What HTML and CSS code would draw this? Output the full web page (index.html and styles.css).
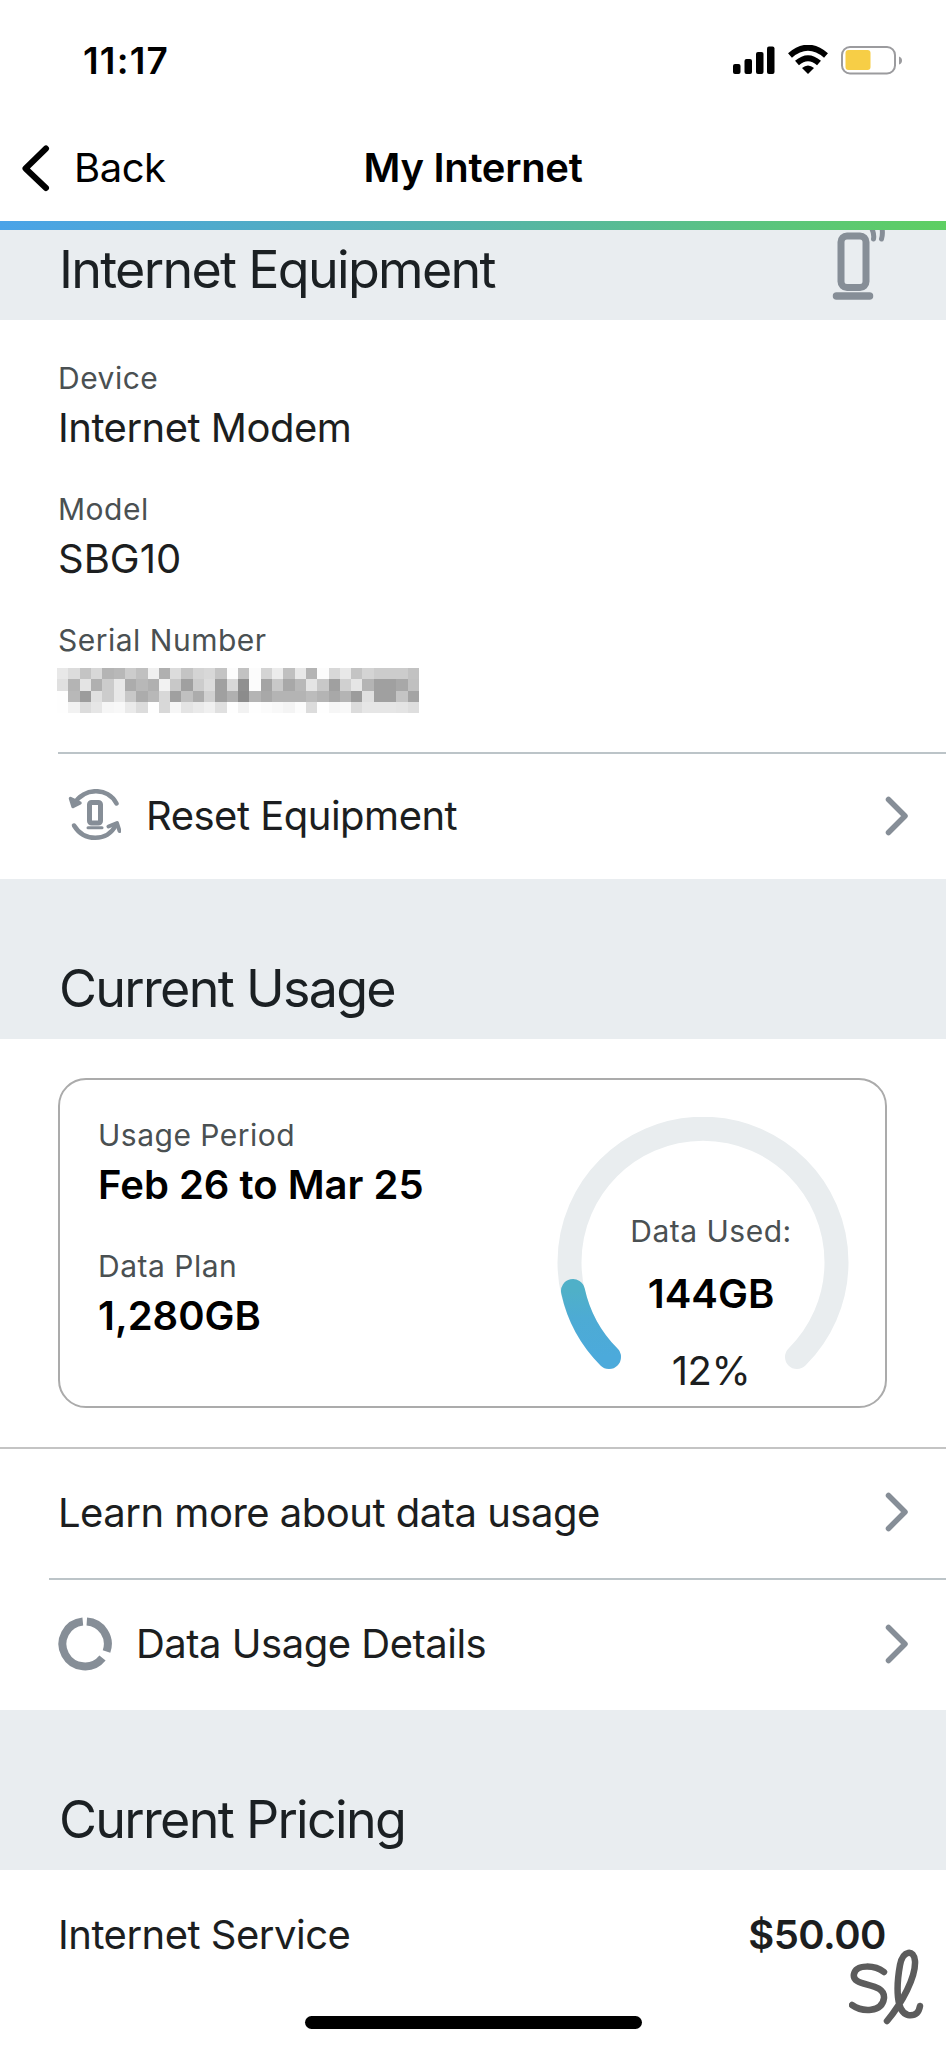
FILE: index.html
```
<!DOCTYPE html>
<html lang="en">
<head>
    <meta charset="UTF-8">
    <meta name="viewport" content="width=device-width, initial-scale=1.0">
    <title>My Internet</title>
    <link rel="stylesheet" href="styles.css">
</head>
<body>
    <!-- Status bar -->
    <div class="status-bar">
        <span class="time">11:17</span>
        <svg class="status-icons" width="172" height="32" viewBox="0 0 172 32">
            <rect x="1" y="19" width="7.5" height="10" rx="2"/>
            <rect x="12.500" y="14" width="7.500" height="15" rx="2"/>
            <rect x="24" y="7" width="7.500" height="22" rx="2"/>
            <rect x="35" y="1.500" width="7.500" height="27.500" rx="2"/>
            <g fill="none" stroke="#000" stroke-width="6">
                <path d="M58 10.500 Q76 -5 94 10.500"/>
                <path d="M65 18 Q76 8.500 87 18"/>
            </g>
            <path d="M76 29 L70 23 Q76 18 82 23 Z"/>
            <rect x="110" y="2" width="53" height="26.500" rx="8" fill="none" stroke="#9b9b9e" stroke-width="2"/>
            <rect x="113.500" y="5" width="25" height="20" rx="3" fill="#f7ce46"/>
            <path d="M167 11.500 Q170 12.500 170 15.500 Q170 18.500 167 19.500 Z" fill="#9b9b9e"/>
        </svg>
    </div>

    <!-- Navigation -->
    <div class="nav">
        <a class="back">
            <svg width="30" height="48" viewBox="0 0 30 48"><path d="M26 4.500 L5.500 24.500 L26 44" fill="none" stroke="#000" stroke-width="6" stroke-linecap="round" stroke-linejoin="round"/></svg>
            Back
        </a>
        <h1>My Internet</h1>
    </div>
    <div class="gradient-bar"></div>

    <!-- Equipment -->
    <div class="section-title first">
        <h2>Internet Equipment</h2>
        <svg class="modem-icon" width="56" height="72" viewBox="0 0 56 72">
            <rect x="9" y="6" width="25" height="51.500" rx="6" fill="none" stroke="#868e97" stroke-width="7"/>
            <path d="M4.500 66 H37.500" stroke="#868e97" stroke-width="7.500" stroke-linecap="round"/>
            <path d="M39.500 -2 Q42.500 4 41.500 9 M50 -2 Q51 4 49.500 9" fill="none" stroke="#868e97" stroke-width="5" stroke-linecap="round"/>
        </svg>
    </div>
    <div class="equipment">
        <div class="field">
            <p class="label">Device</p>
            <p class="value">Internet Modem</p>
        </div>
        <div class="field">
            <p class="label">Model</p>
            <p class="value model">SBG10</p>
        </div>
        <div class="field">
            <p class="label">Serial Number</p>
            <div class="serial" id="serial"></div>
        </div>
    </div>
    <div class="row reset">
        <svg class="row-icon" width="54" height="54" viewBox="0 0 54 54" fill="none" stroke="#868e97" stroke-width="4.500" stroke-linecap="round" stroke-linejoin="round">
            <path d="M7 15 C17 -2 41 -2 49.500 14.500"/>
            <path d="M3.500 9.500 L6 17.500 L13 14 Z" fill="#868e97" stroke-width="3.500"/>
            <path d="M7 36.500 C17 53 40 53 49 36"/>
            <path d="M41.500 37.500 L50 34 L52.500 42" stroke-width="4"/>
            <rect x="22.500" y="13.500" width="11" height="20.500" rx="2" stroke-width="5"/>
            <path d="M21 38.700 H35" stroke-width="3"/>
        </svg>
        <span class="row-text">Reset Equipment</span>
        <svg class="chevron" width="24" height="40" viewBox="0 0 24 40"><path d="M3.500 3.500 L20 20 L3.500 36.500"/></svg>
    </div>

    <!-- Usage -->
    <div class="section-title">
        <h2>Current Usage</h2>
    </div>
    <div class="usage">
        <div class="card">
            <div class="card-info">
                <div class="field">
                    <p class="label">Usage Period</p>
                    <p class="value bold">Feb 26 to Mar 25</p>
                </div>
                <div class="field">
                    <p class="label">Data Plan</p>
                    <p class="value bold">1,280GB</p>
                </div>
            </div>
            <div class="gauge">
                <svg width="292" height="256" viewBox="0 0 292 256" fill="none" stroke-width="24" stroke-linecap="round">
                    <defs>
                        <linearGradient id="used" x1="0" y1="0" x2="0" y2="1">
                            <stop offset="0" stop-color="#4fb0c8"/>
                            <stop offset="0.400" stop-color="#4dabd4"/>
                            <stop offset="1" stop-color="#4caadb"/>
                        </linearGradient>
                    </defs>
                    <path d="M52 240 A133.500 133.500 0 1 1 240 240" stroke="#e9edef"/>
                    <path d="M16 174 A133.500 133.500 0 0 0 52 240" stroke="url(#used)"/>
                </svg>
                <div class="gauge-text">
                    <p class="label">Data Used:</p>
                    <p class="value bold">144GB</p>
                    <p class="value">12%</p>
                </div>
            </div>
        </div>
    </div>
    <div class="row learn">
        <span class="row-text">Learn more about data usage</span>
        <svg class="chevron" width="24" height="40" viewBox="0 0 24 40"><path d="M3.500 3.500 L20 20 L3.500 36.500"/></svg>
    </div>
    <div class="row details">
        <svg class="row-icon" width="54" height="54" viewBox="0 0 54 54" fill="none" stroke="#868e97" stroke-width="8">
            <path d="M28.800 4.500 A22.500 22.500 0 0 1 48.500 34.500"/>
            <path d="M44.500 41 A22.500 22.500 0 1 1 24.800 4.500"/>
        </svg>
        <span class="row-text">Data Usage Details</span>
        <svg class="chevron" width="24" height="40" viewBox="0 0 24 40"><path d="M3.500 3.500 L20 20 L3.500 36.500"/></svg>
    </div>

    <!-- Pricing -->
    <div class="section-title">
        <h2>Current Pricing</h2>
    </div>
    <div class="price-row">
        <span>Internet Service</span>
        <span class="price">$50.00</span>
    </div>

    <div class="home-indicator"></div>
    <svg class="signature" width="76" height="78" viewBox="0 0 76 78">
        <path d="M35 23 C26 16 7 15 5 25 C2 39 36 32 35 49 C33 64 13 63 3 56"/>
        <path d="M38 72 C53 54 67 28 66 12 C65 0 54 1 51 16 C47 38 47 63 59 66 C67 67 70 63 71 57"/>
    </svg>

    <script>
        // Masked serial number, one grey level per block
        const rows = [
            'e8 dc c4 d8 b4 b8 cc c0 f0 b0 dc c4 d4 d8 c4 fc c2 fc d4 ec c0 e8 b4 fc d8 e8 c4 d4 cc cc cc c2',
            'e0 b4 e4 b0 cc e8 ac b8 b0 f2 c8 a0 cc dc a0 d8 90 fc a4 c8 a8 b8 e4 c8 a0 d0 e6 b4 a0 a0 a8 c0',
            'fe b8 9c e0 cc e8 c8 ac b8 d8 a0 c0 ac d0 a0 b0 8c b4 a8 b4 b4 b4 bc b4 a8 b4 9c e0 a0 a0 c4 a4',
            'fe f2 dc e6 f6 f8 ea dc fe d8 f6 e4 ea f0 e0 fe f2 fe fb f8 f4 fc dc fe f6 f8 dc e6 e6 e6 e4 de'
        ];
        const serial = document.getElementById('serial');
        rows.join(' ').split(' ').forEach(grey => {
            const block = document.createElement('span');
            block.style.backgroundColor = '#' + grey + grey + grey;
            serial.appendChild(block);
        });
    </script>
</body>
</html>
```
FILE: styles.css
```
* {
    box-sizing: border-box;
}
body {
    margin: 0;
    height: 2048px;
    overflow: hidden;
    position: relative;
    background-color: #fff;
    font-family: Inter, "Liberation Sans", sans-serif;
    font-size: 40px;
    letter-spacing: -0.5px;
    color: #1c1e20;
}
h1, h2, p {
    margin: 0;
}
svg {
    display: block;
    flex-shrink: 0;
}
.status-bar {
    height: 120px;
    display: flex;
    justify-content: space-between;
    padding: 37px 42px 0 83px;
}
.time {
    font-size: 37px;
    line-height: 48px;
    font-weight: 600;
    letter-spacing: 1.2px;
    color: #000;
}
.status-icons {
    margin-top: 8px;
}
.nav {
    height: 101px;
    display: grid;
    grid-template-columns: 1fr auto 1fr;
    align-items: center;
    padding: 0 20px 6px;
    color: #000;
}
.back {
    display: flex;
    align-items: center;
    gap: 24px;
}
h1 {
    font-size: 40px;
    font-weight: 600;
    letter-spacing: -0.3px;
}
.gradient-bar {
    height: 9px;
    background: linear-gradient(to right, #4aa3e8, #55b3aa 50%, #5ecf62);
}
.section-title {
    height: 160px;
    padding: 0 58px 18px 59px;
    background-color: #e9edf0;
    display: flex;
    align-items: flex-end;
    justify-content: space-between;
}
.section-title.first {
    height: 90px;
}
h2 {
    font-size: 52px;
    line-height: 64px;
    font-weight: 400;
    letter-spacing: -1.7px;
    color: #1b2023;
}
.modem-icon {
    margin-right: 0;
}
.equipment {
    height: 432px;
    padding: 40px 58px 0;
}
.field {
    height: 131px;
}
.label {
    font-size: 30px;
    line-height: 36px;
    color: #4a5052;
    letter-spacing: 0.5px;
}
.value {
    font-size: 40px;
    line-height: 48px;
    padding-top: 8px;
}
.model {
    letter-spacing: 0;
}
.bold {
    font-weight: 600;
    letter-spacing: 0;
    color: #000;
}
.serial {
    display: grid;
    grid-template-columns: repeat(32, 1fr);
    grid-template-rows: repeat(4, 1fr);
    width: 362px;
    height: 45px;
    margin: 10px 0 0 -1px;
}
.row {
    display: flex;
    align-items: center;
    height: 131px;
    padding-right: 37px;
    padding-bottom: 3px;
    border-top: 2px solid #bcc4c8;
}
.row-text {
    flex: 1;
}
.chevron {
    fill: none;
    stroke: #868e97;
    stroke-width: 5.5;
    stroke-linecap: round;
    stroke-linejoin: round;
}
.reset {
    height: 127px;
    margin-left: 58px;
    padding-left: 9px;
    padding-bottom: 2px;
}
.reset .row-icon {
    margin-right: 25px;
}
.usage {
    height: 408px;
    padding: 39px 59px 0 58px;
}
.card {
    display: flex;
    justify-content: space-between;
    height: 330px;
    padding: 37px 36px 0 38px;
    border: 2px solid #ababab;
    border-radius: 28px;
}
.gauge {
    display: grid;
}
.gauge svg, .gauge-text {
    grid-area: 1 / 1;
}
.gauge-text {
    text-align: center;
    padding: 96px 0 0 16px;
}
.gauge-text .value {
    padding-top: 21px;
    margin-bottom: 8px;
}
.learn {
    padding-left: 58px;
    border-top-color: #c4c4c4;
}
.details {
    height: 132px;
    margin-left: 49px;
    padding-left: 9px;
}
.details .row-icon {
    margin-right: 24px;
}
.price-row {
    display: flex;
    justify-content: space-between;
    height: 130px;
    padding: 0 60px 0 58px;
    line-height: 129px;
}
.price {
    font-weight: 600;
}
.home-indicator {
    position: absolute;
    left: 305px;
    bottom: 19px;
    width: 337px;
    height: 13px;
    border-radius: 7px;
    background-color: #000;
}
.signature {
    position: absolute;
    right: 21px;
    bottom: 21px;
    fill: none;
    stroke: #5c5c5c;
    stroke-width: 6.5;
    stroke-linecap: round;
}
```
